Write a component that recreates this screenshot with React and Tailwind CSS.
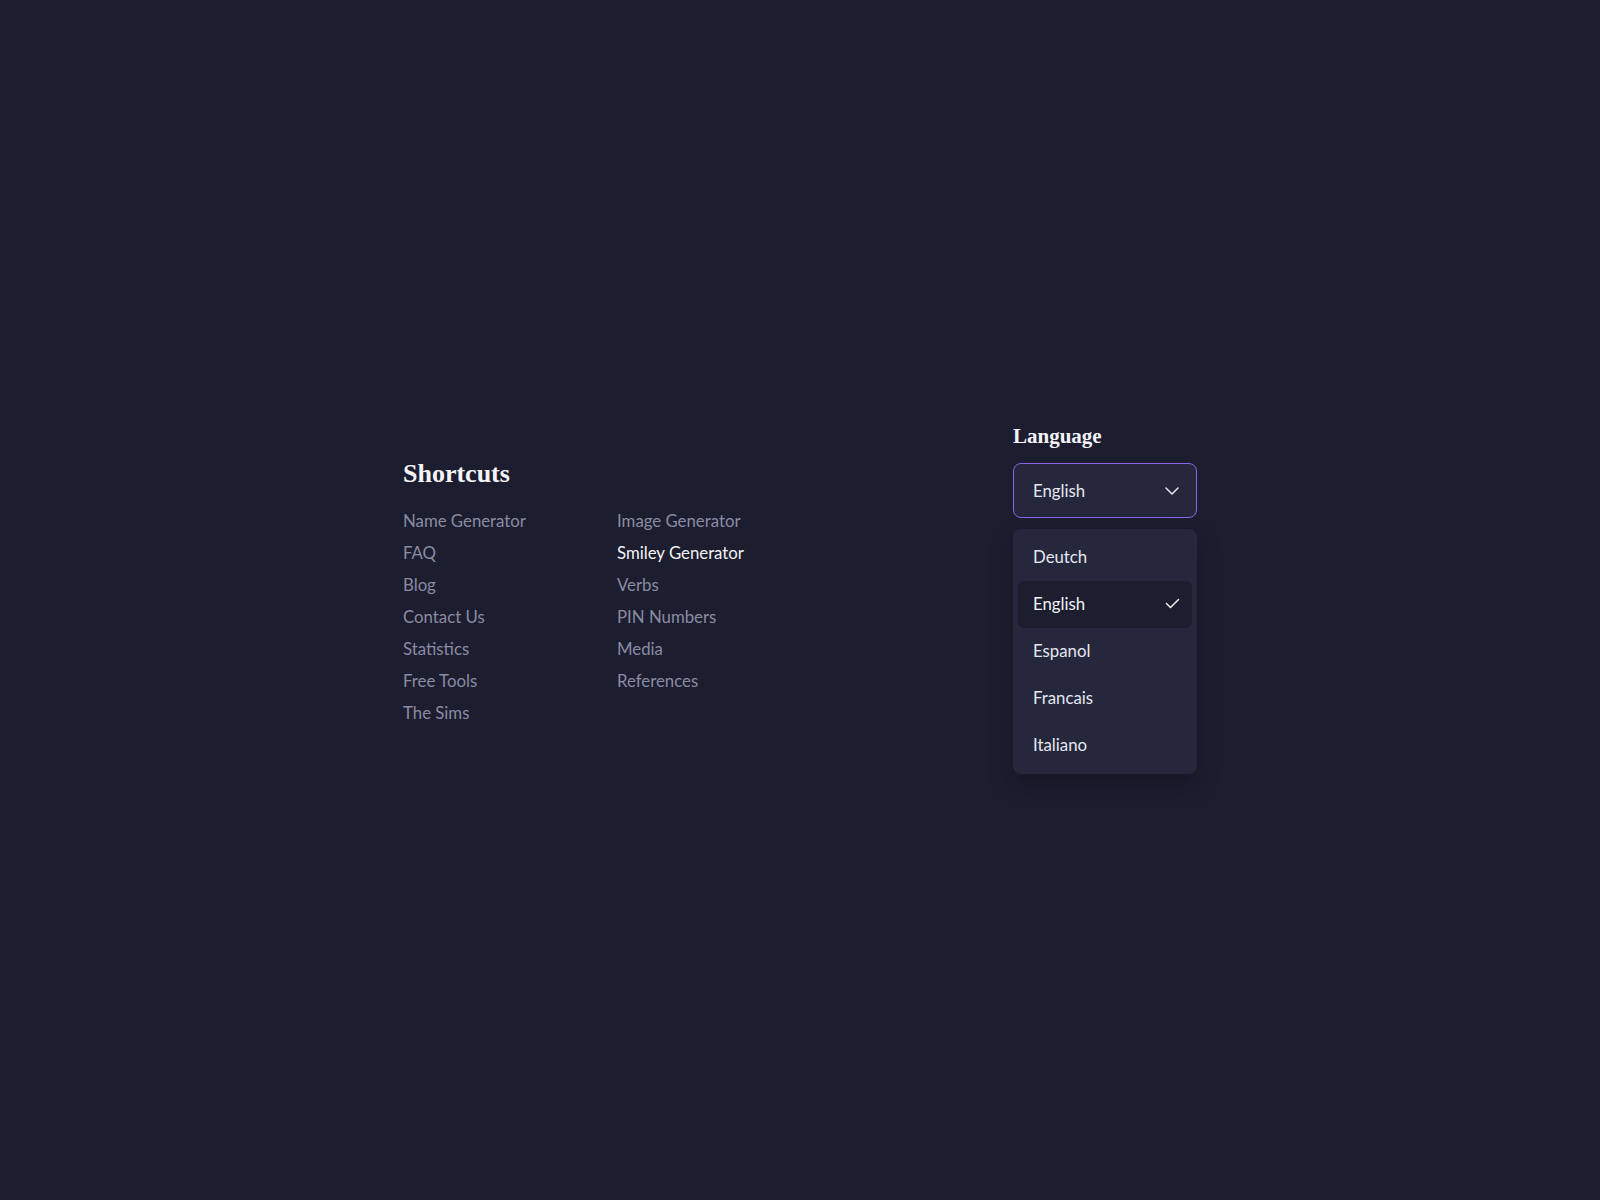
import React, { useState } from 'react';

const leftLinks = ['Name Generator', 'FAQ', 'Blog', 'Contact Us', 'Statistics', 'Free Tools', 'The Sims'];
const rightLinks = ['Image Generator', 'Smiley Generator', 'Verbs', 'PIN Numbers', 'Media', 'References'];
const languages = ['Deutch', 'English', 'Espanol', 'Francais', 'Italiano'];

function LinkColumn({ links, active }) {
    return (
        <ul className="w-[214px]">
            {links.map((link) => (
                <li key={link} className="h-8 flex items-center">
                    <a
                        href="#"
                        className={
                            link === active
                                ? 'text-[16.8px] text-[#f1f1f6]'
                                : 'text-[16.8px] text-[#8a8ba3] hover:text-[#f1f1f6]'
                        }
                    >
                        {link}
                    </a>
                </li>
            ))}
        </ul>
    );
}

function Chevron() {
    return (
        <svg width="14" height="8" viewBox="0 0 14 8" fill="none">
            <path d="M1 1l6 6 6-6" stroke="#e6e6ef" strokeWidth="1.5" strokeLinecap="round" strokeLinejoin="round" />
        </svg>
    );
}

function Check() {
    return (
        <svg width="15" height="11" viewBox="0 0 15 11" fill="none">
            <path d="M1.5 5.5l4 4 8-8" stroke="#f1f1f6" strokeWidth="1.5" strokeLinecap="round" strokeLinejoin="round" />
        </svg>
    );
}

function LanguageSelect() {
    const [language, setLanguage] = useState('English');

    return (
        <div className="w-[184px]">
            <h3 className="text-[21px] leading-6 font-bold text-[#f4f4f8] mb-[15px] font-['Liberation_Serif',serif]">
                Language
            </h3>
            <button className="w-full h-[55px] flex items-center justify-between pl-[19px] pr-[17px] rounded-lg border border-[#8b63e8] bg-[#25273d] text-[16.8px] text-[#e6e6ef]">
                <span>{language}</span>
                <Chevron />
            </button>
            <ul className="mt-[11px] p-[5px] rounded-lg bg-[#25273d] shadow-[0_10px_25px_rgba(0,0,0,0.25)]">
                {languages.map((lang) => (
                    <li
                        key={lang}
                        onClick={() => setLanguage(lang)}
                        className={
                            lang === language
                                ? 'h-[47px] flex items-center justify-between pl-[15px] pr-3 pb-[2px] rounded-md bg-[#1c1d2f] text-[16.8px] text-[#f1f1f6] cursor-pointer'
                                : 'h-[47px] flex items-center justify-between pl-[15px] pr-3 pb-[2px] rounded-md text-[16.8px] text-[#e6e6ef] cursor-pointer'
                        }
                    >
                        <span>{lang}</span>
                        {lang === language && <Check />}
                    </li>
                ))}
            </ul>
        </div>
    );
}

export default function App() {
    return (
        <div className="min-h-screen bg-[#1c1d2f] font-['Lato',sans-serif]">
            <footer className="w-[794px] mx-auto pt-[424px] flex justify-between items-start">
                <div className="mt-[34px]">
                    <h2 className="text-[26px] leading-8 font-bold text-[#f4f4f8] mb-[15px] font-['Liberation_Serif',serif]">
                        Shortcuts
                    </h2>
                    <div className="flex">
                        <LinkColumn links={leftLinks} />
                        <LinkColumn links={rightLinks} active="Smiley Generator" />
                    </div>
                </div>
                <LanguageSelect />
            </footer>
        </div>
    );
}
